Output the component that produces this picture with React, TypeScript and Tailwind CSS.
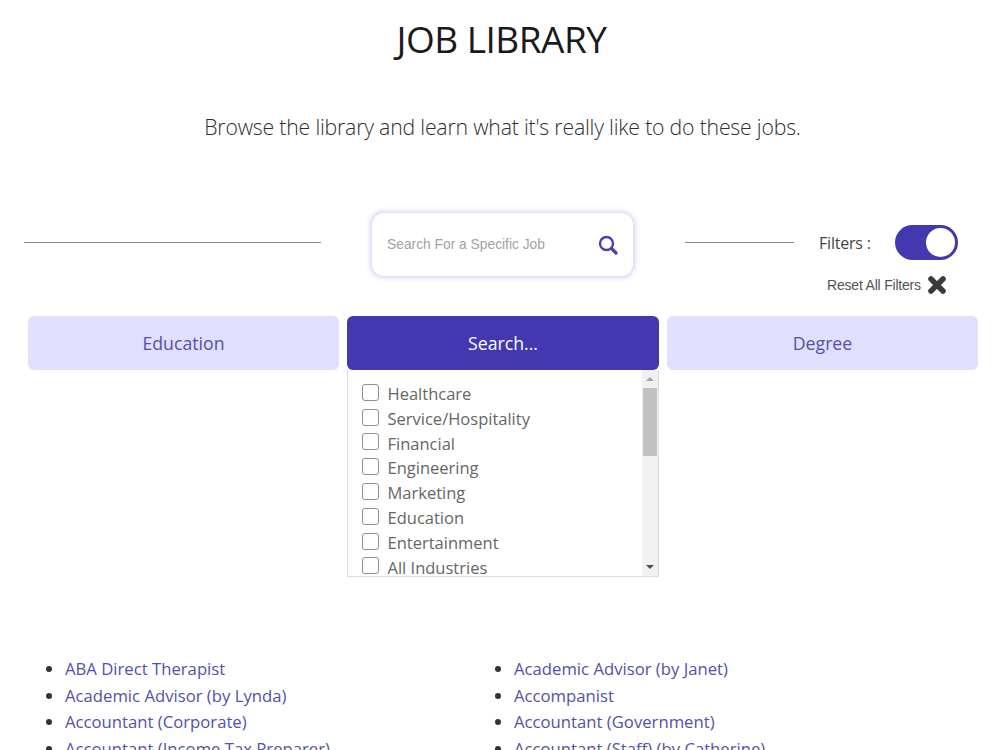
import React from "react";

const industries = [
  "Healthcare",
  "Service/Hospitality",
  "Financial",
  "Engineering",
  "Marketing",
  "Education",
  "Entertainment",
  "All Industries",
];

const leftJobs = ["ABA Direct Therapist", "Academic Advisor (by Lynda)", "Accountant (Corporate)", "Accountant (Income Tax Preparer)"];
const rightJobs = ["Academic Advisor (by Janet)", "Accompanist", "Accountant (Government)", "Accountant (Staff) (by Catherine)"];

const JobColumn: React.FC<{ jobs: string[] }> = ({ jobs }) => (
  <ul className="w-[449px] list-disc pl-[17px] text-[16.7px] leading-[26.6px] text-[#333] marker:text-[#333]">
    {jobs.map((job) => (
      <li key={job}>
        <a className="text-[#5451a8]">{job}</a>
      </li>
    ))}
  </ul>
);

export default function App() {
  return (
    <div className="h-[750px] overflow-hidden bg-white font-['Open_Sans',sans-serif]">
      {/* Heading */}
      <h1 className="pl-[3px] pt-[14px] text-center text-[37px] leading-[50px] tracking-[-0.5px] text-[#1a1a1a]">JOB LIBRARY</h1>
      <p className="mt-[49px] pl-[5px] text-center text-[21.25px] font-light leading-[28px] tracking-[-0.2px] text-[#2e2e2e]">
        Browse the library and learn what it's really like to do these jobs.
      </p>

      {/* Search and filter toggle */}
      <div className="mt-[72px] flex pl-[24px]">
        <div className="mt-[29px] h-px w-[297px] bg-[#8a8a8a]" />
        <div className="ml-[51px] flex h-[63px] w-[261px] items-center justify-between rounded-[12px] bg-white pl-[15px] pr-[15px] shadow-[0_0_5px_2px_#d6d3f7]">
          <span className="pt-[1px] font-['Liberation_Sans',sans-serif] text-[13.8px] text-[#a3a3a3]">Search For a Specific Job</span>
          <svg viewBox="0 0 20 20" className="h-[20px] w-[20px] text-[#4a41ad]" fill="none" stroke="currentColor">
            <circle cx="8.5" cy="8.5" r="6.5" strokeWidth="2.4" />
            <line x1="13.5" y1="13.5" x2="18" y2="18" strokeWidth="3.2" strokeLinecap="round" />
          </svg>
        </div>
        <div className="ml-[52px] mt-[29px] h-px w-[109px] bg-[#8a8a8a]" />
        <div className="ml-[25px] flex w-[139px] flex-col">
          <div className="mt-[12px] flex items-center">
            <span className="text-[16px] tracking-[-0.2px] text-[#444]">Filters :</span>
            <div className="ml-[24px] flex h-[35px] w-[63px] items-center justify-end rounded-full bg-[#4338b0] pr-[3px]">
              <div className="h-[29px] w-[29px] rounded-full bg-white" />
            </div>
          </div>
          <div className="ml-[8px] mt-[14px] flex items-center font-['Liberation_Sans',sans-serif] text-[14px] leading-[20px] tracking-[-0.2px] text-[#555]">
            <span>Reset All Filters</span>
            <svg viewBox="0 0 20 20" className="ml-[6px] mt-[1px] h-[20px] w-[20px] text-[#3a3a3a]" stroke="currentColor" strokeWidth="5.5" strokeLinecap="round">
              <line x1="4" y1="4" x2="16" y2="16" />
              <line x1="16" y1="4" x2="4" y2="16" />
            </svg>
          </div>
        </div>
      </div>

      {/* Filter dropdowns */}
      <div className="ml-[28px] mt-[21px] flex w-[950px] items-start gap-[8px]">
        <div className="flex h-[54px] w-[311px] items-center justify-center rounded-[6px] bg-[#e0dffd] text-[17.7px] text-[#5451a8]">Education</div>
        <div className="w-[312px]">
          <div className="flex h-[54px] items-center justify-center rounded-[6px] bg-[#4338b0] text-[17.7px] text-white">Search...</div>
          <div className="flex h-[207px] overflow-hidden border border-t-0 border-[#dcdcdc]">
            <div className="flex-1 pl-[14px] pt-[12px]">
              {industries.map((name) => (
                <label key={name} className="flex h-[24.8px] items-center text-[16.5px] text-[#666]">
                  <span className="mb-[4px] h-[17px] w-[17px] shrink-0 rounded-[3px] border border-[#8f8f8f] bg-white" />
                  <span className="ml-[8.5px]">{name}</span>
                </label>
              ))}
            </div>
            <div className="flex w-[16px] flex-col items-center bg-[#f1f1f1]">
              <div className="mt-[7px] h-0 w-0 border-x-[4px] border-b-[4px] border-x-transparent border-b-[#a3a3a3]" />
              <div className="mt-[7px] h-[68px] w-[14px] bg-[#c1c1c1]" />
              <div className="mt-auto mb-[7px] h-0 w-0 border-x-[4px] border-t-[4px] border-x-transparent border-t-[#505050]" />
            </div>
          </div>
        </div>
        <div className="flex h-[54px] w-[311px] items-center justify-center rounded-[6px] bg-[#e0dffd] text-[17.7px] text-[#5451a8]">Degree</div>
      </div>

      {/* Job list */}
      <div className="ml-[48px] mt-[79px] flex">
        <JobColumn jobs={leftJobs} />
        <JobColumn jobs={rightJobs} />
      </div>
    </div>
  );
}
